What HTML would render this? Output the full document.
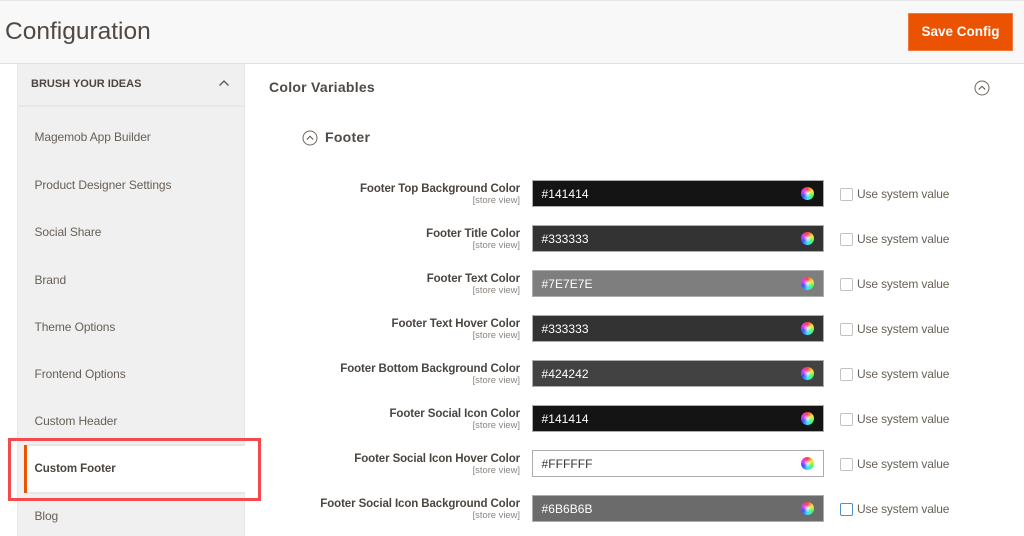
<!DOCTYPE html>
<html><head><meta charset="utf-8">
<style>
html,body{margin:0;padding:0;background:#fff}
body{width:1024px;height:536px;overflow:hidden;position:relative;font-family:"Liberation Sans",sans-serif;color:#514943}
.a{position:absolute;white-space:nowrap}
.nav{left:34.5px;font-size:12px;letter-spacing:-.1px;color:#676056;line-height:16px}
.lab{right:504px;font-size:11.5px;font-weight:bold;color:#4a4540;line-height:14px;letter-spacing:-.1px}
.sv{right:504px;font-size:9.4px;color:#8a8580;line-height:10px}
.inp{left:532px;width:290px;height:25px;border:1px solid #adadad;line-height:27px;font-size:12px;box-sizing:content-box}
.inp span{margin-left:8.5px;letter-spacing:.05px}
.dot{position:absolute;left:801px;width:13px;height:13px;border-radius:50%;background:radial-gradient(circle at 50% 50%,rgba(255,255,255,.85) 0,rgba(255,255,255,0) 45%),conic-gradient(#ff4040,#ffe640,#40ff60,#40e0ff,#4050ff,#e040ff,#ff4040)}
.cb{position:absolute;left:840px;width:11px;height:11px;border:1px solid #c2c2c2;border-radius:2px;background:#fff}
.use{left:857px;font-size:12px;color:#676056;line-height:16px;letter-spacing:-.15px}
</style></head><body>
<div class="a" style="left:0;top:0;width:1024px;height:64px;background:#f8f8f8;border-top:1px solid #e6e6e6;border-bottom:1px solid #e3e3e3;box-sizing:border-box"></div>
<div class="a" style="left:5px;top:16px;font-size:24.5px;line-height:32px;color:#514943">Configuration</div>
<div class="a" style="left:908px;top:13px;width:105px;height:38px;background:#eb5202;border:1px solid #f0793d;box-sizing:border-box;color:#fff;font-weight:bold;font-size:13.5px;line-height:36px;text-align:center">Save Config</div>

<div class="a" style="left:17px;top:64px;width:228px;height:472px;background:#f0f0f0;border-left:1px solid #e6e6e6;border-right:1px solid #e6e6e6;box-sizing:border-box"></div>
<div class="a" style="left:18px;top:105px;width:226px;height:2px;background:#e8e8e8"></div>
<div class="a" style="left:31px;top:77px;font-size:11px;font-weight:bold;line-height:15px;color:#4a4540">BRUSH YOUR IDEAS</div>
<svg class="a" style="left:218px;top:79px" width="12" height="8" viewBox="0 0 12 8"><path d="M1.5 6.5 6 2l4.5 4.5" fill="none" stroke="#5a5550" stroke-width="1.3"/></svg>

<div class="a nav" style="top:129px">Magemob App Builder</div>
<div class="a nav" style="top:177px">Product Designer Settings</div>
<div class="a nav" style="top:224px">Social Share</div>
<div class="a nav" style="top:272px">Brand</div>
<div class="a nav" style="top:319px">Theme Options</div>
<div class="a nav" style="top:366px">Frontend Options</div>
<div class="a nav" style="top:413px">Custom Header</div>
<div class="a" style="left:24px;top:445px;width:221px;height:48px;background:#fff"></div>
<div class="a" style="left:24px;top:445px;width:3px;height:48px;background:#eb5202"></div>
<div class="a" style="left:27px;top:444px;width:218px;height:2px;background:#e6e6e6"></div>
<div class="a" style="left:27px;top:492px;width:218px;height:2px;background:#e6e6e6"></div>
<div class="a nav" style="top:461px;font-weight:bold;color:#4a4540;font-size:11.5px;letter-spacing:-.05px">Custom Footer</div>
<div class="a nav" style="top:508px">Blog</div>
<div class="a" style="left:8px;top:438px;width:253px;height:63px;border:3px solid #f44a4e;box-sizing:border-box"></div>

<div class="a" style="left:269px;top:78px;font-size:14px;font-weight:bold;line-height:18px;color:#4f4a45;letter-spacing:.27px">Color Variables</div>
<svg class="a" style="left:974px;top:79.5px" width="16" height="16" viewBox="0 0 16 16"><circle cx="8" cy="8" r="7" fill="none" stroke="#6b6660" stroke-width="1"/><path d="M4.8 9.5 8 6.3l3.2 3.2" fill="none" stroke="#514943" stroke-width="1"/></svg>
<svg class="a" style="left:302px;top:129.5px" width="16" height="16" viewBox="0 0 16 16"><circle cx="8" cy="8" r="7" fill="none" stroke="#6b6660" stroke-width="1"/><path d="M4.8 9.5 8 6.3l3.2 3.2" fill="none" stroke="#514943" stroke-width="1"/></svg>
<div class="a" style="left:325px;top:128px;font-size:14px;font-weight:bold;line-height:18px;color:#4f4a45;letter-spacing:.27px">Footer</div>

<div class="a lab" style="top:182px">Footer Top Background Color</div><div class="a sv" style="top:195px">[store view]</div>
<div class="a inp" style="top:180px;background:#141414;color:#fff"><span>#141414</span></div><div class="dot" style="top:186.5px"></div><div class="cb" style="top:188px"></div><div class="a use" style="top:186px">Use system value</div>

<div class="a lab" style="top:227px">Footer Title Color</div><div class="a sv" style="top:240px">[store view]</div>
<div class="a inp" style="top:225px;background:#333333;color:#fff"><span>#333333</span></div><div class="dot" style="top:231.5px"></div><div class="cb" style="top:233px"></div><div class="a use" style="top:231px">Use system value</div>

<div class="a lab" style="top:272px">Footer Text Color</div><div class="a sv" style="top:285px">[store view]</div>
<div class="a inp" style="top:270px;background:#7e7e7e;color:#fff"><span>#7E7E7E</span></div><div class="dot" style="top:276.5px"></div><div class="cb" style="top:278px"></div><div class="a use" style="top:276px">Use system value</div>

<div class="a lab" style="top:317px">Footer Text Hover Color</div><div class="a sv" style="top:330px">[store view]</div>
<div class="a inp" style="top:315px;background:#333333;color:#fff"><span>#333333</span></div><div class="dot" style="top:321.5px"></div><div class="cb" style="top:323px"></div><div class="a use" style="top:321px">Use system value</div>

<div class="a lab" style="top:362px">Footer Bottom Background Color</div><div class="a sv" style="top:375px">[store view]</div>
<div class="a inp" style="top:360px;background:#424242;color:#fff"><span>#424242</span></div><div class="dot" style="top:366.5px"></div><div class="cb" style="top:368px"></div><div class="a use" style="top:366px">Use system value</div>

<div class="a lab" style="top:407px">Footer Social Icon Color</div><div class="a sv" style="top:420px">[store view]</div>
<div class="a inp" style="top:405px;background:#141414;color:#fff"><span>#141414</span></div><div class="dot" style="top:411.5px"></div><div class="cb" style="top:413px"></div><div class="a use" style="top:411px">Use system value</div>

<div class="a lab" style="top:452px">Footer Social Icon Hover Color</div><div class="a sv" style="top:465px">[store view]</div>
<div class="a inp" style="top:450px;background:#fff;color:#333"><span>#FFFFFF</span></div><div class="dot" style="top:456.5px"></div><div class="cb" style="top:458px"></div><div class="a use" style="top:456px">Use system value</div>

<div class="a lab" style="top:497px">Footer Social Icon Background Color</div><div class="a sv" style="top:510px">[store view]</div>
<div class="a inp" style="top:495px;background:#6b6b6b;color:#fff"><span>#6B6B6B</span></div><div class="dot" style="top:501.5px"></div><div class="cb" style="top:503px;border-color:#4a90d0"></div><div class="a use" style="top:501px">Use system value</div>
</body></html>
